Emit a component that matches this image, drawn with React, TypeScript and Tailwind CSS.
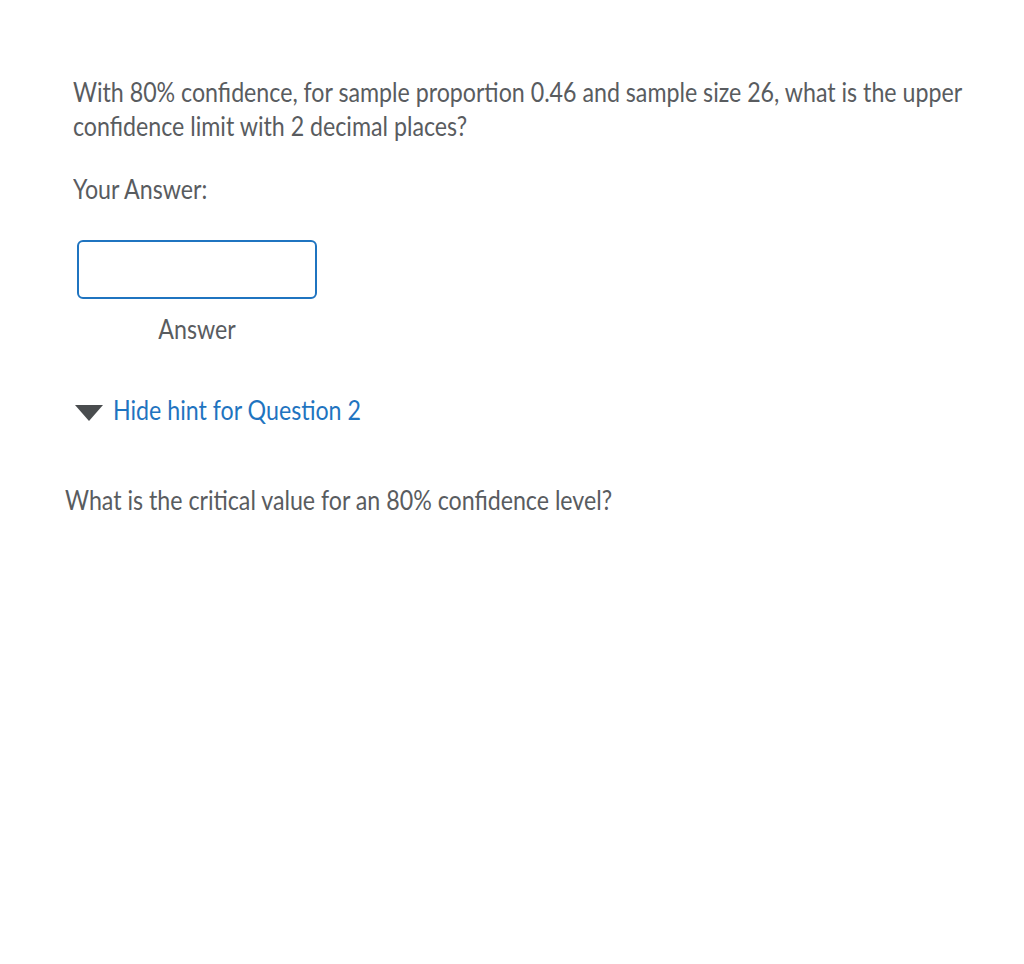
export default function App() {
  return (
    <div className="min-h-[964px] w-[1024px] bg-white text-[#595c5f]" style={{ fontFamily: "Lato, 'Noto Sans', sans-serif" }}>
      <div className="pl-[73px] pt-[76px]">
        <p className="origin-top scale-y-120 text-[23.2px] leading-[27.5px] w-[920px]">
          With 80% confidence, for sample proportion 0.46 and sample size 26, what is the upper confidence limit with 2 decimal places?
        </p>
        <p className="mt-[43px] origin-top scale-y-120 text-[23.2px] leading-[25px]">Your Answer:</p>
        <div className="mt-[41px] ml-[4px] w-[240px]">
          <div className="h-[59px] w-[240px] rounded-[6px] border-2 border-[#1f74c0]" />
          <div className="mt-[15px] origin-top scale-y-120 text-center text-[23.2px] leading-[25px]">Answer</div>
        </div>
        <div className="mt-[56px] flex items-start">
          <svg width="28" height="16" viewBox="0 0 28 16" className="ml-[2px] mt-[10px] shrink-0">
            <polygon points="0,0 28,0 14,16" fill="#494c4e" />
          </svg>
          <span className="ml-[10px] block origin-top scale-y-120 text-[23.2px] leading-[25px] text-[#1f74c0]">Hide hint for Question 2</span>
        </div>
      </div>
      <p className="pl-[65px] mt-[64px] origin-top scale-y-120 text-[23.2px] leading-[25px]">What is the critical value for an 80% confidence level?</p>
    </div>
  );
}
